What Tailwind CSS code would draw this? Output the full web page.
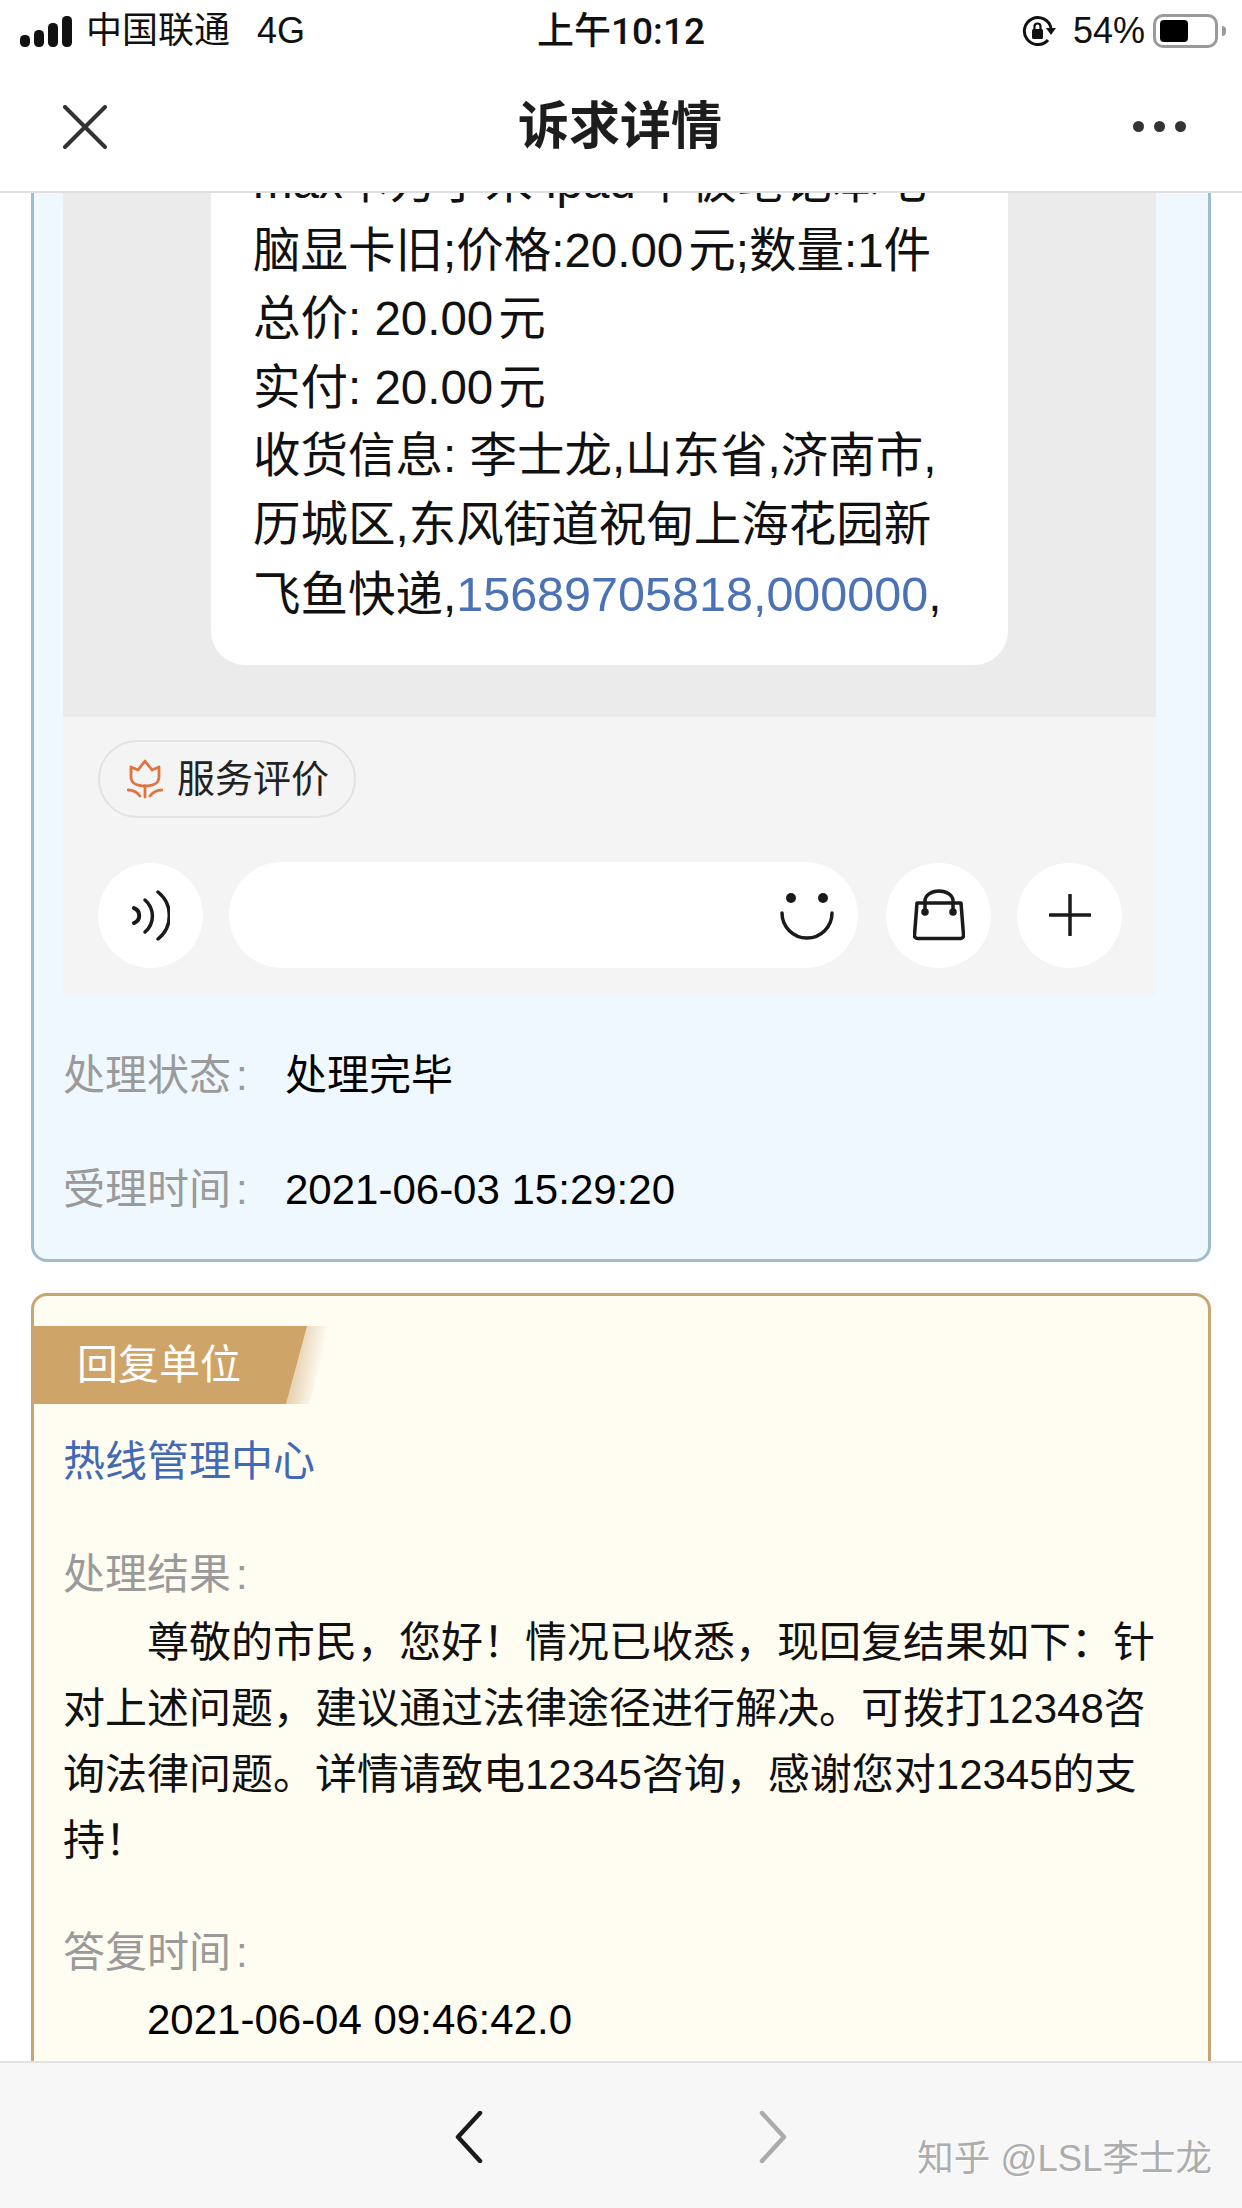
<!doctype html>
<html lang="zh">
<head>
<meta charset="utf-8">
<script src="https://cdn.jsdelivr.net/npm/@tailwindcss/browser@4"></script>
</head>
<body class="bg-white">
<div class="relative flex h-[2208px] w-[1242px] flex-col overflow-hidden bg-white font-['Liberation_Sans','Noto_Sans_CJK_SC',sans-serif] text-black">

  <!-- status bar -->
  <div class="flex h-[62px] shrink-0 items-center justify-between pl-[20px] pr-[16px] text-[36px] leading-none text-[#111]">
    <div class="flex w-[418px] items-center">
      <svg width="52" height="32" viewBox="0 0 52 32" class="mr-[14px]" fill="#111"><rect x="0" y="20" width="10" height="12" rx="4.500"/><rect x="14" y="15" width="10" height="17" rx="4.500"/><rect x="28" y="8" width="10" height="24" rx="4.500"/><rect x="42" y="1" width="10" height="31" rx="4.500"/></svg>
      <span class="w-[171px] whitespace-nowrap">中国联通</span>
      <span>4G</span>
    </div>
    <div class="font-['Roboto','Noto_Sans_CJK_SC',sans-serif] text-[37px] font-medium whitespace-nowrap">上午10:12</div>
    <div class="flex w-[422px] items-center justify-end">
      <svg width="34" height="30" viewBox="0 0 34 30" fill="none" stroke="#111" stroke-width="3" class="mr-[17px]"><path d="M26 24A13.500 13.500 0 1 1 29 12"/><path d="M24 12h10l-5 7z" fill="#111" stroke="none"/><rect x="10" y="13" width="11" height="10" rx="1.500" fill="#111" stroke="none"/><path d="M12.500 14v-3.500a3 3 0 0 1 6 0V14" stroke-width="2.200"/></svg>
      <span class="mr-[8px]">54%</span>
      <div class="flex h-[34px] w-[65px] items-center rounded-[10px] border-[3px] border-[#9a9a9a] p-[3px] pl-[4px]"><div class="h-[22px] w-[28px] rounded-[4px] bg-black"></div></div>
      <div class="ml-[4px] h-[10px] w-[4px] rounded-r-full bg-[#9a9a9a]"></div>
    </div>
  </div>

  <!-- navigation -->
  <div class="relative z-10 flex h-[131px] shrink-0 items-center justify-between border-b-2 border-[#dfdfdf] bg-white pl-[63px] pr-[56px]">
    <svg width="44" height="44" viewBox="0 0 44 44" fill="none" stroke="#333" stroke-width="4" stroke-linecap="round"><path d="M2 2l40 40M42 2L2 42"/></svg>
    <div class="text-[51px] leading-none font-semibold text-[#1d1d1d]">诉求详情</div>
    <div class="flex gap-[10px]"><span class="size-[11px] rounded-full bg-[#333]"></span><span class="size-[11px] rounded-full bg-[#333]"></span><span class="size-[11px] rounded-full bg-[#333]"></span></div>
  </div>

  <!-- scrolled content -->
  <div class="min-h-0 flex-1 overflow-hidden">
    <div class="mt-[-50px] px-[31px]">
      <div class="h-[1119px] rounded-b-[16px] border-[3px] border-[#9dbdcb] bg-[#eff8fe] pl-[29px] pr-[52px]">
        <div class="bg-[#ebebeb] pb-[52px]">
          <div class="mx-auto w-[797px] rounded-b-[34px] bg-white pt-[2px] pb-[36px] pl-[42px] text-[47.500px] leading-[68.600px] whitespace-nowrap text-[#111]">
            <div>max卡万小米 ipad<span class="ml-[6px]">平板笔记本电</span></div>
            <div>脑显卡旧;价格:20.00<span class="ml-[5px]">元</span>;数量:1件</div>
            <div>总价: 20.00<span class="ml-[5px]">元</span></div>
            <div>实付: 20.00<span class="ml-[5px]">元</span></div>
            <div>收货信息: 李士龙,山东省,济南市,</div>
            <div>历城区,东风街道祝甸上海花园新</div>
            <div>飞鱼快递,<span class="text-[48.500px] text-[#4a72b4]">15689705818,000000</span>,</div>
          </div>
        </div>
        <div class="flex h-[278px] flex-col bg-[#f4f4f4] pl-[35px] pt-[23px]">
          <div class="flex h-[78px] w-[258px] items-center rounded-full border-2 border-[#e2e2e2] pl-[27px]">
            <svg width="36" height="41" viewBox="0 0 36 41" fill="none" stroke="#e0733e" stroke-width="2.800" stroke-linecap="round" stroke-linejoin="round" class="mr-[14px]"><path d="M4 8l7 3 7-9 7 9 7-3v10c0 6-6 9-14 9S4 24 4 18z"/><path d="M18 27v11M1 31c5 0 9 2 12 6M35 31c-5 0-9 2-12 6"/></svg>
            <span class="text-[38px] leading-none whitespace-nowrap text-[#222]">服务评价</span>
          </div>
          <div class="mt-[44px] flex items-center">
            <div class="flex size-[105px] items-center justify-center rounded-full bg-white">
              <svg width="38" height="51" viewBox="0 0 38 51" fill="none" stroke="#1a1a1a" stroke-width="3.500" stroke-linecap="round"><path d="M2 18A8 8 0 0 1 2 33" stroke-width="4"/><path d="M13 10A21 21 0 0 1 13 42"/><path d="M26 2A30 30 0 0 1 26 49"/></svg>
            </div>
            <div class="ml-[26px] flex h-[106px] w-[629px] items-center justify-end rounded-full bg-white pr-[23px]">
              <svg width="56" height="50" viewBox="0 0 56 50" fill="none" stroke="#1a1a1a" stroke-width="3.500" stroke-linecap="round" class="mt-[6px]"><circle cx="12" cy="5" r="5" fill="#1a1a1a" stroke="none"/><circle cx="44" cy="5" r="5" fill="#1a1a1a" stroke="none"/><path d="M3 20a25 25 0 0 0 50 0"/></svg>
            </div>
            <div class="ml-[28px] flex size-[105px] items-center justify-center rounded-full bg-white">
              <svg width="52" height="52" viewBox="0 0 52 52" fill="none" stroke="#1a1a1a" stroke-width="3.500" stroke-linecap="round" stroke-linejoin="round"><path d="M4 14h44l2.500 32a3 3 0 0 1-3 3.500H4.500a3 3 0 0 1-3-3.500z"/><path d="M12 23V12a14 10 0 0 1 28 0v11"/><circle cx="12" cy="23" r="2" fill="#1a1a1a"/><circle cx="40" cy="23" r="2" fill="#1a1a1a"/></svg>
            </div>
            <div class="ml-[26px] flex size-[105px] items-center justify-center rounded-full bg-white">
              <svg width="42" height="42" viewBox="0 0 42 42" fill="none" stroke="#1a1a1a" stroke-width="3.500" stroke-linecap="round"><path d="M21 1v40M1 21h40"/></svg>
            </div>
          </div>
        </div>
        <div class="mt-[50px] flex h-[62px] items-center text-[42px] leading-none"><span class="w-[222px] text-[#9a9a9a]">处理状态<span class="ml-[5px]">:</span></span><span>处理完毕</span></div>
        <div class="mt-[52px] flex h-[62px] items-center text-[42px] leading-none"><span class="w-[222px] text-[#9a9a9a]">受理时间<span class="ml-[5px]">:</span></span><span>2021-06-03 15:29:20</span></div>
      </div>

      <div class="mt-[31px] h-[900px] rounded-t-[16px] border-[3px] border-[#c8a673] bg-[#fffcf2] pt-[30px]">
        <div class="relative h-[78px] w-[296px]">
          <div class="absolute inset-y-0 left-0 w-[296px] bg-[linear-gradient(100deg,#e8d5b8_87%,#fffcf2_95%)] [clip-path:polygon(0_0,100%_0,93%_100%,0_100%)]"></div>
          <div class="absolute inset-y-0 left-0 flex w-[273px] items-center bg-[#cfa468] pl-[43px] text-[41px] leading-none whitespace-nowrap text-white [clip-path:polygon(0_0,100%_0,92.300%_100%,0_100%)]">回复单位</div>
        </div>
        <div class="mt-[27px] pl-[29px] text-[42px] leading-[62px] text-[#4269b4]">热线管理中心</div>
        <div class="mt-[51px] pl-[29px] pr-[22px]">
          <div class="text-[42px] leading-[62px] text-[#9a9a9a]">处理结果<span class="ml-[5px]">:</span></div>
          <p class="mt-[4px] indent-[84px] text-[42px] leading-[66px] text-[#111]">尊敬的市民，您好！情况已收悉，现回复结果如下：针对上述问题，建议通过法律途径进行解决。可拨打12348咨询法律问题。详情请致电12345咨询，感谢您对12345的支持！</p>
          <div class="mt-[48px] text-[42px] leading-[62px] text-[#9a9a9a]">答复时间<span class="ml-[5px]">:</span></div>
          <div class="mt-[5px] pl-[84px] text-[42px] leading-[62px] text-black">2021-06-04 09:46:42.0</div>
        </div>
      </div>
    </div>
  </div>

  <!-- bottom toolbar -->
  <div class="relative z-10 flex h-[147px] shrink-0 items-start justify-center gap-[276px] border-t-2 border-[#e2e2e2] bg-[#f7f7f7] pt-[48px]">
    <svg width="28" height="52" viewBox="0 0 28 52" fill="none" stroke="#1b1b1b" stroke-width="4.500" stroke-linecap="round" stroke-linejoin="round"><path d="M25 2L3 26l22 24"/></svg>
    <svg width="28" height="52" viewBox="0 0 28 52" fill="none" stroke="#ababab" stroke-width="4.500" stroke-linecap="round" stroke-linejoin="round"><path d="M3 2l22 24L3 50"/></svg>
    <div class="absolute right-[30px] bottom-[31px] text-[36.500px] leading-none whitespace-nowrap text-[#adadad] [text-shadow:1px_1px_0_#fff]">知乎 @LSL李士龙</div>
  </div>
</div>
</body>
</html>
